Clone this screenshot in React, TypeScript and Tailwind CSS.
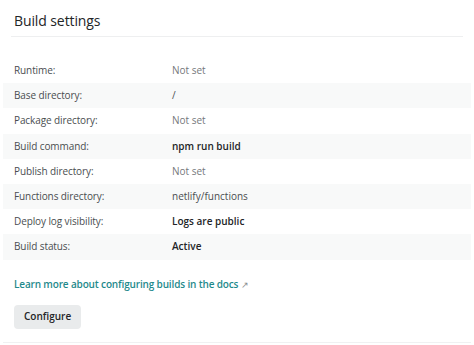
const rows: { label: string; value: string; kind: 'muted' | 'plain' | 'bold' }[] = [
  { label: 'Runtime:', value: 'Not set', kind: 'muted' },
  { label: 'Base directory:', value: '/', kind: 'plain' },
  { label: 'Package directory:', value: 'Not set', kind: 'muted' },
  { label: 'Build command:', value: 'npm run build', kind: 'bold' },
  { label: 'Publish directory:', value: 'Not set', kind: 'muted' },
  { label: 'Functions directory:', value: 'netlify/functions', kind: 'plain' },
  { label: 'Deploy log visibility:', value: 'Logs are public', kind: 'bold' },
  { label: 'Build status:', value: 'Active', kind: 'bold' },
];

const valueClass = {
  muted: 'text-[#75787b]',
  plain: 'text-[#4a4d50]',
  bold: 'font-semibold text-[#232527]',
};

export default function App() {
  return (
    <div className="h-[345px] w-[474px] bg-white font-['Open_Sans',sans-serif]">
      <div className="mx-[3px] h-[343px] border-b border-[#f0f1f2]">
        <div className="mx-[8px] border-b border-[#eeeff0] px-[3px] pb-[6px] pt-[12px]">
          <h2 className="text-[14px] font-medium leading-[18px] tracking-[-0.1px] text-[#232527]">Build settings</h2>
        </div>
        <div className="mt-[21px]">
          {rows.map((row, i) => (
            <div
              key={row.label}
              className={`flex h-[25.2px] items-center text-[10px] ${i % 2 === 1 ? 'bg-[#f8f9f9]' : ''}`}
            >
              <span className="w-[169px] pl-[11px] tracking-[-0.1px] text-[#4a4d50]">{row.label}</span>
              <span className={valueClass[row.kind]}>{row.value}</span>
            </div>
          ))}
        </div>
        <div className="mt-[17px] pl-[11px] text-[10px] font-semibold tracking-[-0.15px] text-[#1f8a8c]">
          Learn more about configuring builds in the docs{' '}
          <span className="text-[9px] font-normal text-[#8a8d90]">↗</span>
        </div>
        <button className="ml-[11px] mt-[13px] h-[24px] rounded-[4px] bg-[#e9ebec] px-[10px] text-[10px] font-semibold text-[#232527]">
          Configure
        </button>
      </div>
    </div>
  );
}
